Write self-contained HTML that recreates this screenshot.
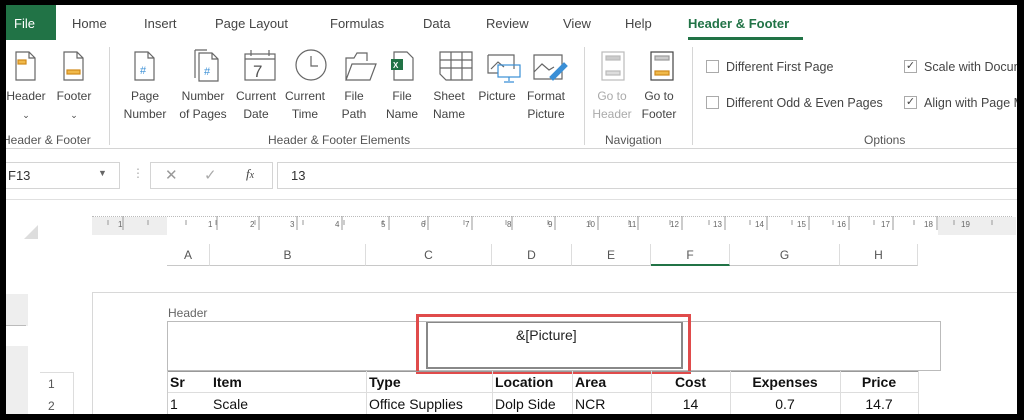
<!DOCTYPE html><html><head><style>
*{margin:0;padding:0;box-sizing:border-box}
body{width:1024px;height:420px;background:#000;position:relative;overflow:hidden;font-family:"Liberation Sans",sans-serif;color:#333}
.a{position:absolute}
#app{left:6px;top:5px;width:1011px;height:409px;background:#fff;overflow:hidden}
.t{font-size:13px;color:#444;top:11px}
.lbl{font-size:12px;color:#444;text-align:center;line-height:18px}
.grp{font-size:12px;color:#555;top:128px}
.sep{width:1px;background:#d6d6d6;top:42px;height:98px}
.cb{width:13px;height:13px;border:1px solid #aaa;background:#fff;font-size:11px;line-height:11px;text-align:center;color:#444}
.col{top:239px;height:22px;font-size:12px;color:#555;text-align:center;line-height:22px;border-right:1px solid #ddd;border-bottom:1px solid #c8c8c8}
.c{font-size:14px;color:#111;line-height:22px;font-family:"Liberation Sans",sans-serif}
.b{font-weight:bold}
</style></head><body>
<div id="app" class="a">
<!-- tabs -->
<div class="a" style="left:0;top:0;width:50px;height:35px;background:#217346"></div>
<div class="a t" style="left:8px;color:#fff">File</div>
<div class="a t" style="left:66px">Home</div>
<div class="a t" style="left:138px">Insert</div>
<div class="a t" style="left:209px">Page Layout</div>
<div class="a t" style="left:324px">Formulas</div>
<div class="a t" style="left:417px">Data</div>
<div class="a t" style="left:480px">Review</div>
<div class="a t" style="left:557px">View</div>
<div class="a t" style="left:619px">Help</div>
<div class="a t" style="left:682px;color:#217346;font-weight:bold">Header &amp; Footer</div>
<div class="a" style="left:682px;top:32px;width:115px;height:3px;background:#217346"></div>
<div class="a" style="left:0;top:143px;width:1011px;height:1px;background:#d4d4d4"></div>
<!-- icons -->
<svg class="a" style="left:0;top:42px" width="1011" height="48" fill="none" stroke="#666" stroke-width="1.2">
<path d="M10 5h13l6 6v22H10z M23 5v6h6"/><rect x="12" y="13" width="8" height="4" fill="#f0b94a" stroke="#d08a1a"/>
<path d="M58 5h13l6 6v22H58z M71 5v6h6"/><rect x="61" y="23" width="13" height="4" fill="#f0b94a" stroke="#d08a1a"/>
<path d="M129 5h13l6 6v22h-19z M142 5v6h6"/><text x="134" y="27" font-size="11" fill="#3a8fd6" stroke="none">#</text>
<path d="M189 3h12 M189 3v28 M193 6h13l6 6v22h-19z M206 6v6h6"/><text x="198" y="28" font-size="11" fill="#3a8fd6" stroke="none">#</text>
<rect x="239" y="7" width="30" height="26"/><path d="M239 12h30 M245 3v6 M263 3v6"/><text x="247" y="30" font-size="17" fill="#555" stroke="none">7</text>
<circle cx="305" cy="18" r="15"/><path d="M305 9v10h7"/>
<path d="M340 33V11h8l3 -5h10v8 M340 33l6-16h24l-6 16z"/>
<path d="M388 5h13l6 6v22H388z"/><rect x="385" y="12" width="12" height="11" fill="#217346" stroke="none"/><text x="387" y="21" font-size="8" fill="#fff" stroke="none" font-weight="bold">X</text>
<path d="M434 5h32v28h-26l-6-6z M434 13h32 M434 21h32 M445 5v28 M456 5v28"/>
<path d="M482 8h26v14 M482 8v18h10 M485 22l7-7 6 5"/><rect x="492" y="18" width="22" height="12" stroke="#3a8fd6"/><path d="M503 30v4 M498 35h10" stroke="#3a8fd6"/>
<path d="M528 8h28v24h-28z M528 25l8-8 7 6 5-3"/><path d="M544 30l14-14 3 3-14 14z" fill="#3a8fd6" stroke="#3a8fd6"/>
<rect x="596" y="5" width="22" height="28" stroke="#bbb"/><rect x="600" y="9" width="14" height="4" fill="#ccc" stroke="#bbb"/><rect x="600" y="24" width="14" height="4" fill="#ddd" stroke="#bbb"/>
<rect x="645" y="5" width="22" height="28" stroke="#444"/><rect x="649" y="9" width="14" height="4" fill="#ccc" stroke="#999"/><rect x="649" y="24" width="14" height="4" fill="#f0b94a" stroke="#d08a1a"/>
</svg>
<div class="a lbl" style="left:-4px;top:82px;width:48px">Header<br><span style="font-size:9px">⌄</span></div>
<div class="a lbl" style="left:46px;top:82px;width:44px">Footer<br><span style="font-size:9px">⌄</span></div>
<div class="a grp" style="left:-4px">Header &amp; Footer</div>
<div class="a sep" style="left:103px"></div>
<div class="a lbl" style="left:110px;top:82px;width:58px">Page<br>Number</div>
<div class="a lbl" style="left:167px;top:82px;width:60px">Number<br>of Pages</div>
<div class="a lbl" style="left:224px;top:82px;width:52px">Current<br>Date</div>
<div class="a lbl" style="left:274px;top:82px;width:50px">Current<br>Time</div>
<div class="a lbl" style="left:328px;top:82px;width:40px">File<br>Path</div>
<div class="a lbl" style="left:376px;top:82px;width:40px">File<br>Name</div>
<div class="a lbl" style="left:420px;top:82px;width:46px">Sheet<br>Name</div>
<div class="a lbl" style="left:468px;top:82px;width:46px">Picture</div>
<div class="a lbl" style="left:514px;top:82px;width:52px">Format<br>Picture</div>
<div class="a grp" style="left:262px">Header &amp; Footer Elements</div>
<div class="a sep" style="left:578px"></div>
<div class="a lbl" style="left:584px;top:82px;width:44px;color:#aaa">Go to<br>Header</div>
<div class="a lbl" style="left:631px;top:82px;width:44px">Go to<br>Footer</div>
<div class="a grp" style="left:599px">Navigation</div>
<div class="a sep" style="left:686px"></div>
<div class="a cb" style="left:700px;top:55px"></div><div class="a" style="left:720px;top:55px;font-size:12.5px;color:#444">Different First Page</div>
<div class="a cb" style="left:700px;top:91px"></div><div class="a" style="left:720px;top:91px;font-size:12.5px;color:#444">Different Odd &amp; Even Pages</div>
<div class="a cb" style="left:898px;top:55px">✓</div><div class="a" style="left:918px;top:55px;font-size:12.5px;color:#444;white-space:nowrap">Scale with Document</div>
<div class="a cb" style="left:898px;top:91px">✓</div><div class="a" style="left:918px;top:91px;font-size:12.5px;color:#444;white-space:nowrap">Align with Page Margins</div>
<div class="a grp" style="left:858px">Options</div>
<!-- formula bar -->
<div class="a" style="left:0;top:144px;width:1011px;height:50px;background:#fff"></div>
<div class="a" style="left:-2px;top:157px;width:116px;height:27px;border:1px solid #d4d4d4"></div>
<div class="a" style="left:2px;top:163px;font-size:13px;color:#333">F13</div>
<div class="a" style="left:92px;top:163px;font-size:9px;color:#666">▼</div>
<div class="a" style="left:126px;top:161px;font-size:12px;color:#aaa">⋮</div>
<div class="a" style="left:144px;top:157px;width:123px;height:27px;border:1px solid #d4d4d4"></div>
<div class="a" style="left:159px;top:161px;font-size:15px;color:#999">✕</div>
<div class="a" style="left:198px;top:161px;font-size:15px;color:#aaa">✓</div>
<div class="a" style="left:240px;top:161px;font-size:13px;color:#444;font-family:'Liberation Serif',serif;font-style:italic">f<span style="font-size:10px">x</span></div>
<div class="a" style="left:271px;top:157px;width:745px;height:27px;border:1px solid #d4d4d4"></div>
<div class="a" style="left:285px;top:163px;font-size:13px;color:#333">13</div>
<div class="a" style="left:0;top:194px;width:1011px;height:1px;background:#e0e0e0"></div>
<!-- corner & ruler -->
<svg class="a" style="left:18px;top:220px" width="14" height="14"><path d="M14 0V14H0z" fill="#ddd"/></svg>
<div class="a" style="left:86px;top:211px;width:920px;height:20px;background:#fff;border-top:1px dotted #bbb"></div>
<div class="a" style="left:86px;top:212px;width:75px;height:18px;background:#eee"></div>
<div class="a" style="left:932px;top:212px;width:78px;height:18px;background:#eee"></div>
<svg class="a" style="left:86px;top:211px" width="925" height="20" font-size="8" fill="#666">
<g stroke="#999" stroke-width="1">
<path d="M16 4v5 M31 0v14 M56 4v5 M94 4v5 M124 4v5 M163 4v5 M211 4v5 M252 4v5 M291 4v5 M333 4v5 M372 4v5 M414 4v5 M456 4v5 M498 4v5 M537 4v5 M578 4v5 M617 4v5 M658 4v5 M700 4v5 M741 4v5 M782 4v5 M822 4v5 M862 4v5 M900 4v5"/>
<path d="M125 0v14 M167 0v14 M205 0v14 M250 0v14 M297 0v14 M336 0v14 M380 0v14 M420 0v14 M463 0v14 M506 0v14 M546 0v14 M590 0v14 M633 0v14 M675 0v14 M717 0v14 M757 0v14 M801 0v14 M845 0v14"/>
</g>
<text x="26" y="11">1</text><text x="116" y="11">1</text><text x="158" y="11">2</text><text x="198" y="11">3</text><text x="243" y="11">4</text><text x="289" y="11">5</text><text x="329" y="11">6</text><text x="373" y="11">7</text><text x="415" y="11">8</text><text x="456" y="11">9</text><text x="494" y="11">10</text><text x="536" y="11">11</text><text x="578" y="11">12</text><text x="621" y="11">13</text><text x="663" y="11">14</text><text x="705" y="11">15</text><text x="745" y="11">16</text><text x="789" y="11">17</text><text x="832" y="11">18</text><text x="869" y="11">19</text>
</svg>
<!-- column headers -->
<div class="a col" style="left:161px;width:43px">A</div>
<div class="a col" style="left:204px;width:156px">B</div>
<div class="a col" style="left:360px;width:126px">C</div>
<div class="a col" style="left:486px;width:80px">D</div>
<div class="a col" style="left:566px;width:79px">E</div>
<div class="a col" style="left:645px;width:79px;border-bottom:2px solid #217346">F</div>
<div class="a col" style="left:724px;width:110px">G</div>
<div class="a col" style="left:834px;width:78px">H</div>
<!-- left strip -->
<div class="a" style="left:0;top:289px;width:22px;height:32px;background:#eee"></div>
<div class="a" style="left:0;top:320px;width:20px;height:1px;background:#bbb"></div>
<div class="a" style="left:0;top:341px;width:22px;height:72px;background:#eee"></div>
<div class="a" style="left:34px;top:367px;width:34px;height:46px;border-top:1px solid #ddd;border-right:1px solid #ddd"></div>
<div class="a" style="left:42px;top:368px;font-size:12px;color:#555;line-height:22px">1<br>2</div>
<!-- page -->
<div class="a" style="left:86px;top:287px;width:930px;height:130px;border:1px solid #d8d8d8;background:#fff"></div>
<div class="a" style="left:162px;top:301px;font-size:12px;color:#666">Header</div>
<div class="a" style="left:161px;top:316px;width:774px;height:50px;border:1px solid #bbb"></div>
<div class="a" style="left:420px;top:317px;width:257px;height:47px;border:2px solid #888;border-top-width:1px"></div>
<div class="a" style="left:410px;top:309px;width:275px;height:60px;border:3px solid #e04b4b"></div>
<div class="a" style="left:510px;top:322px;font-size:14px;color:#222">&amp;[Picture]</div>
<!-- table -->
<div class="a" style="left:161px;top:366px;width:752px;height:1px;background:#999"></div>
<div class="a" style="left:161px;top:387px;width:752px;height:1px;background:#ddd"></div>
<div class="a" style="left:161px;top:366px;width:1px;height:50px;background:#ccc"></div>
<div class="a c b" style="left:164px;top:366px">Sr</div>
<div class="a c b" style="left:207px;top:366px">Item</div>
<div class="a c b" style="left:363px;top:366px">Type</div>
<div class="a c b" style="left:489px;top:366px">Location</div>
<div class="a c b" style="left:569px;top:366px">Area</div>
<div class="a c b" style="left:645px;top:366px;width:79px;text-align:center">Cost</div>
<div class="a c b" style="left:724px;top:366px;width:110px;text-align:center">Expenses</div>
<div class="a c b" style="left:834px;top:366px;width:78px;text-align:center">Price</div>
<div class="a c" style="left:164px;top:388px">1</div>
<div class="a c" style="left:207px;top:388px">Scale</div>
<div class="a c" style="left:363px;top:388px">Office Supplies</div>
<div class="a c" style="left:489px;top:388px">Dolp Side</div>
<div class="a c" style="left:569px;top:388px">NCR</div>
<div class="a c" style="left:645px;top:388px;width:79px;text-align:center">14</div>
<div class="a c" style="left:724px;top:388px;width:110px;text-align:center">0.7</div>
<div class="a c" style="left:834px;top:388px;width:78px;text-align:center">14.7</div>
<div class="a" style="left:360px;top:366px;width:1px;height:50px;background:#ddd"></div>
<div class="a" style="left:486px;top:366px;width:1px;height:50px;background:#ddd"></div>
<div class="a" style="left:566px;top:366px;width:1px;height:50px;background:#ddd"></div>
<div class="a" style="left:645px;top:366px;width:1px;height:50px;background:#ddd"></div>
<div class="a" style="left:724px;top:366px;width:1px;height:50px;background:#ddd"></div>
<div class="a" style="left:834px;top:366px;width:1px;height:50px;background:#ddd"></div>
<div class="a" style="left:912px;top:366px;width:1px;height:50px;background:#ddd"></div>
</div>
</body></html>
